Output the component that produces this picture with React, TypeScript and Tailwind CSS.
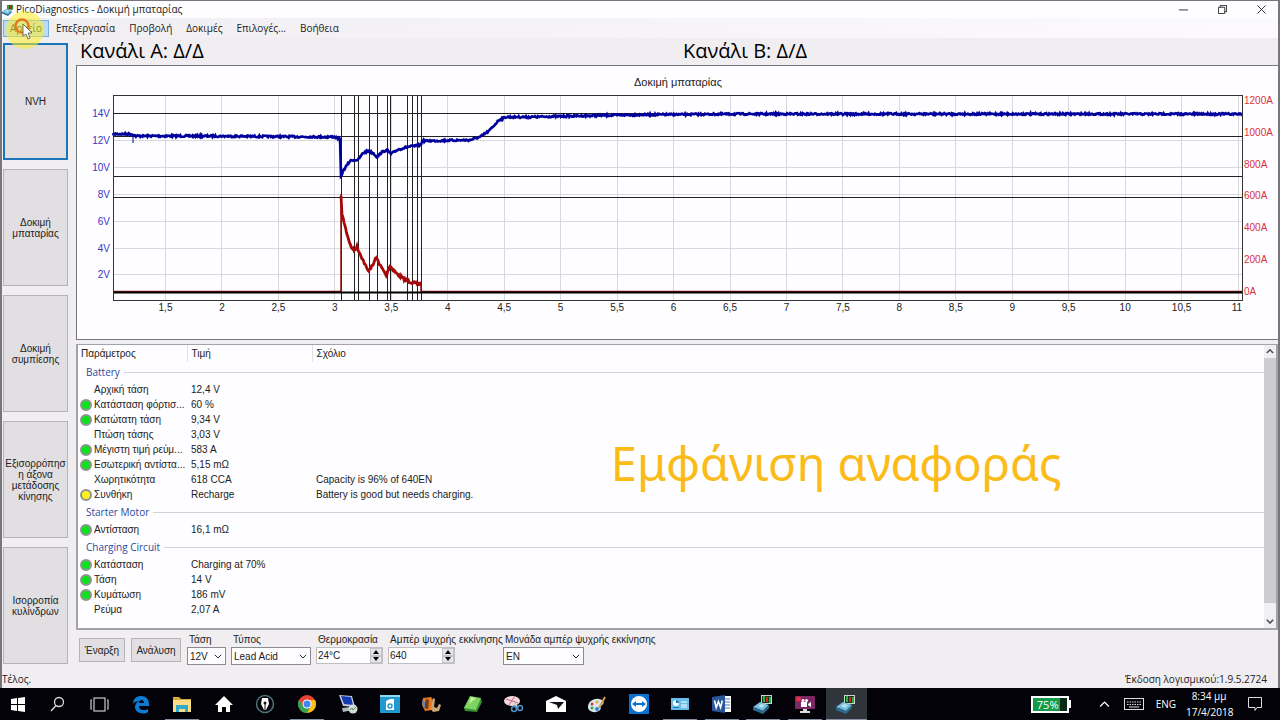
import React from "react";

const UI = "font-['Open_Sans','Noto_Sans',sans-serif]";
const SANS = "font-['Liberation_Sans',Arial,sans-serif]";

type Point = [number, number];

const voltage: Point[] = [
  [36, 68], [54, 68], [59, 70], [124, 70], [258, 71], [263, 73], [264, 111], [266, 105], [273, 95],
  [276, 94], [281, 94], [286, 87], [291, 85], [296, 87], [300, 91], [305, 86], [310, 84], [314, 88],
  [320, 84], [330, 81], [344, 79], [345, 75], [393, 74], [403, 71], [412, 65], [422, 54], [429, 51],
  [453, 51], [543, 49], [663, 48], [1165, 48],
];
const current: Point[] = [
  [264, 131], [265, 148], [267, 156], [270, 168], [274, 181], [277, 184], [280, 181], [285, 192], [291, 205],
  [296, 199], [299, 191], [303, 199], [309, 209], [313, 200], [320, 208], [330, 215], [337, 217], [344, 218],
];

function noisy(points: Point[], amount: number): string {
  const out: string[] = [];
  let seed = 7;
  for (let i = 0; i < points.length - 1; i++) {
    const [x0, y0] = points[i];
    const [x1, y1] = points[i + 1];
    const steps = Math.max(1, Math.round((x1 - x0) * 1.4));
    for (let s = 0; s < steps; s++) {
      seed = (seed * 16807) % 2147483647;
      const jitter = (seed / 2147483647 - 0.5) * amount;
      const t = s / steps;
      out.push(`${(x0 + (x1 - x0) * t).toFixed(1)},${(y0 + (y1 - y0) * t + jitter).toFixed(1)}`);
    }
  }
  const last = points[points.length - 1];
  out.push(`${last[0]},${last[1]}`);
  return out.join(" ");
}

const timeLabels = ["1,5", "2", "2,5", "3", "3,5", "4", "4,5", "5", "5,5", "6", "6,5", "7", "7,5", "8", "8,5", "9", "9,5", "10", "10,5", "11"];
const voltLabels = ["14V", "12V", "10V", "8V", "6V", "4V", "2V"];
const ampLabels = ["1200A", "1000A", "800A", "600A", "400A", "200A", "0A"];
const cursors = [264, 277, 281, 292, 300, 310, 313, 330, 335, 340, 344];

function Chart() {
  return (
    <svg viewBox="0 0 1201 273" className={`block h-auto w-full ${SANS}`} role="img" aria-label="Δοκιμή μπαταρίας">
      <text x="601" y="20" textAnchor="middle" fontSize="11" fill="#222">Δοκιμή μπαταρίας</text>
      <g shapeRendering="crispEdges">
        {timeLabels.map((t, i) => (
          <line key={t} x1={Math.round(88 + i * 56.45)} x2={Math.round(88 + i * 56.45)} y1="29" y2="235" stroke="#d8d8de" />
        ))}
        {voltLabels.map((v, i) => (
          <line key={v} x1="36" x2="1165" y1={Math.round(47 + i * 26.9)} y2={Math.round(47 + i * 26.9)} stroke="#d8d8de" />
        ))}
        {[47, 70, 110, 131].map((y) => (
          <line key={y} x1="36" x2="1165" y1={y} y2={y} stroke="#222" />
        ))}
        {cursors.map((x) => (
          <line key={x} x1={x} x2={x} y1="29" y2="235" stroke="#222" />
        ))}
      </g>
      <polyline points={noisy(voltage, 1.8)} fill="none" stroke="#00009c" strokeWidth="2.6" />
      <path d="M56 69v8" stroke="#00009c" />
      <path d="M36 225.500H264V128" fill="none" stroke="#8d1111" strokeWidth="1.500" />
      <path d="M344 219v6.500H1165" fill="none" stroke="#8d1111" strokeWidth="1.500" />
      <polyline points={noisy(current, 2.4)} fill="none" stroke="#a40a0a" strokeWidth="2.800" />
      <path d="M36 226.500H1165" stroke="#000" strokeWidth="2" />
      <rect x="36.500" y="29.500" width="1129" height="205" fill="none" stroke="#333" />
      {timeLabels.map((t, i) => (
        <text key={t} x={Math.min(1160, 88.500 + i * 56.45)} y="245" textAnchor="middle" fontSize="10" fill="#222">{t}</text>
      ))}
      {voltLabels.map((v, i) => (
        <text key={v} x="33" y={51 + i * 26.9} textAnchor="end" fontSize="10" fill="#4034c8">{v}</text>
      ))}
      {ampLabels.map((a, i) => (
        <text key={a} x="1167" y={38 + i * 31.8} fontSize="10" fill="#d8323c">{a}</text>
      ))}
    </svg>
  );
}

type Row = { name: string; value: string; note?: string; lamp?: "green" | "yellow" };
const groups: { title: string; rows: Row[] }[] = [
  {
    title: "Battery",
    rows: [
      { name: "Αρχική τάση", value: "12,4 V" },
      { name: "Κατάσταση φόρτισ...", value: "60 %", lamp: "green" },
      { name: "Κατώτατη τάση", value: "9,34 V", lamp: "green" },
      { name: "Πτώση τάσης", value: "3,03 V" },
      { name: "Μέγιστη τιμή ρεύμ...", value: "583 A", lamp: "green" },
      { name: "Εσωτερική αντίστα...", value: "5,15 mΩ", lamp: "green" },
      { name: "Χωρητικότητα", value: "618 CCA", note: "Capacity is 96% of 640EN" },
      { name: "Συνθήκη", value: "Recharge", note: "Battery is good but needs charging.", lamp: "yellow" },
    ],
  },
  { title: "Starter Motor", rows: [{ name: "Αντίσταση", value: "16,1 mΩ", lamp: "green" }] },
  {
    title: "Charging Circuit",
    rows: [
      { name: "Κατάσταση", value: "Charging at 70%", lamp: "green" },
      { name: "Τάση", value: "14 V", lamp: "green" },
      { name: "Κυμάτωση", value: "186 mV", lamp: "green" },
      { name: "Ρεύμα", value: "2,07 A" },
    ],
  },
];

function Lamp({ color }: { color?: "green" | "yellow" }) {
  if (!color) return <span className="size-3 shrink-0" />;
  return (
    <span
      className={`size-3 shrink-0 rounded-full border-2 border-[#8f9391] ${color === "green" ? "bg-[#0be41c]" : "bg-[#fdf219]"}`}
    />
  );
}

function Results() {
  return (
    <div className="flex border-2 border-t border-[#a4a3a8] bg-[#fefdff]">
      <table className="mb-[11px] w-full min-w-0 flex-1 table-fixed border-collapse self-start text-left text-[10px] leading-[15px] text-[#222]">
        <colgroup>
          <col className="w-[109px]" />
          <col className="w-[125px]" />
          <col />
        </colgroup>
        <thead>
          <tr className="h-[17px]">
            <th className="border-r border-[#e2e0e6] px-[3px] py-0 font-normal">Παράμετρος</th>
            <th className="border-r border-[#e2e0e6] px-1 py-0 font-normal">Τιμή</th>
            <th className="px-1 py-0 font-normal">Σχόλιο</th>
          </tr>
        </thead>
        {groups.map((g) => (
          <tbody key={g.title}>
            <tr className="h-5">
              <th colSpan={3} className="p-0 pl-2 font-normal">
                <span className={`flex items-center gap-1 text-[10px] text-[#2b4c9b] ${UI}`}>
                  {g.title}
                  <span className="h-px flex-1 bg-[#d3d2da]" />
                </span>
              </th>
            </tr>
            {g.rows.map((r) => (
              <tr key={r.name} className="h-[15px]">
                <td className="p-0 pl-[2px]">
                  <span className="flex items-center gap-[2px] whitespace-nowrap">
                    <Lamp color={r.lamp} />
                    {r.name}
                  </span>
                </td>
                <td className="px-1 py-0">{r.value}</td>
                <td className="px-1 py-0">{r.note}</td>
              </tr>
            ))}
          </tbody>
        ))}
      </table>
      <div className="flex w-3 shrink-0 flex-col items-center justify-between bg-[#f0eff1] py-1 text-[#505050]">
        <Chevron className="w-2 rotate-180" bold />
        <div className="mb-4 mt-1 w-full flex-1 bg-[#cdccce]" />
        <Chevron className="w-2" bold />
      </div>
    </div>
  );
}

function Chevron({ className, bold }: { className: string; bold?: boolean }) {
  return (
    <svg viewBox="0 0 10 6" className={className} fill="none" stroke="currentColor" strokeWidth={bold ? 2 : 1.2} aria-hidden="true">
      <path d="M1 1l4 4 4-4" />
    </svg>
  );
}

function Picker({ id, label, options, field, box }: { id: string; label: string; options: string[]; field: string; box: string }) {
  return (
    <div className={`shrink-0 ${field}`}>
      <label htmlFor={id} className="block whitespace-nowrap pl-[2px] leading-[15px]">{label}</label>
      <div className={`grid items-center ${box}`}>
        <select id={id} className="col-start-1 row-start-1 h-[18px] w-full appearance-none border border-[#8b8a8e] bg-[#fefdff] pl-[2px]">
          {options.map((o) => <option key={o}>{o}</option>)}
        </select>
        <Chevron className="pointer-events-none col-start-1 row-start-1 mr-1 w-2 justify-self-end" />
      </div>
    </div>
  );
}

function Stepper({ id, label, value, field }: { id: string; label: string; value: string; field: string }) {
  return (
    <div className={`shrink-0 ${field}`}>
      <label htmlFor={id} className="block whitespace-nowrap pl-[2px] leading-[15px]">{label}</label>
      <div className="flex h-[17px] w-[67px] border border-[#c0bfc4] bg-[#fefdff]">
        <input id={id} defaultValue={value} className="w-0 flex-1 bg-transparent pl-px outline-none" />
        <div className="flex w-3 flex-col bg-[#e6e5e8]">
          <button type="button" aria-label={`${label} +`} className="flex flex-1 items-center justify-center border border-[#c4c3c7]">
            <svg viewBox="0 0 6 4" className="w-[6px]"><path d="M0 4l3-4 3 4z" /></svg>
          </button>
          <button type="button" aria-label={`${label} -`} className="flex flex-1 items-center justify-center border border-[#c4c3c7]">
            <svg viewBox="0 0 6 4" className="w-[6px]"><path d="M0 0l3 4 3-4z" /></svg>
          </button>
        </div>
      </div>
    </div>
  );
}

const PicoShape = () => (
  <g>
    <path d="M8 1h11v9H8z" fill="#c8d4cc" />
    <path d="M9 2h9v7H9z" fill="#16351f" />
    <path d="M10 2h2v6h-2zM16 3h2v6h-2z" fill="#26b33b" />
    <path d="M13 3h2v5h-2z" fill="#d4222d" />
    <path d="M0 13l7-5 9 3-6 6z" fill="#78bcdc" />
    <path d="M0 13v3l10 4 6-6v-3l-6 6z" fill="#2b6d91" />
    <path d="M5 12l3-2 4 1-3 3z" fill="#b5e2f0" />
  </g>
);

const shapes: Record<string, React.ReactNode> = {
  start: <path fill="#fff" d="M3 5l6-1v6H3zM10 4l7-1v7h-7zM3 11h6v6l-6-1zM10 11h7v7l-7-1z" />,
  search: <g fill="none" stroke="#ddd" strokeWidth="1.300"><circle cx="12" cy="8" r="4.500" /><path d="M9 11.500L4 17" /></g>,
  tasks: <g fill="none" stroke="#ccc" strokeWidth="1.200"><rect x="5" y="4" width="11" height="13" /><path d="M3 6H2v9h1M18 6h1v9h-1" /></g>,
  edge: <path fill="#0c7cd5" d="M2 9C3 4 6 2 10 2c5 0 8 3 8 8v2H8c0 3 2 4 5 4 2 0 3-.5 4-1v3c-1 1-3 1.500-5 1.500-5 0-8-3-8-6.500 0-3 2-5 4-6-3 .5-5 1-6 3zm6 0h5c0-2-1-3-2.500-3S8 7 8 9z" />,
  files: <g><path fill="#d9a83f" d="M1 3h6l2 2h10v13H1z" /><path fill="#fbdd87" d="M1 6h18v12H1z" /><path fill="#35a9ca" d="M4 11h12v7h-3v-3H7v3H4z" /></g>,
  home: <path fill="#fff" d="M10 2l9 9h-3v7h-4v-5H8v5H4v-7H1z" />,
  pen: <g><circle cx="10" cy="10" r="8.500" fill="none" stroke="#51747b" strokeWidth="1.500" /><path fill="#fff" d="M7 4h6l1 6-3 6h-2l-3-6z" /><path stroke="#111" d="M10 10v6" /><circle cx="10" cy="9" r="1.500" fill="#111" /></g>,
  chrome: <g><circle cx="10" cy="10" r="9" fill="#e94335" /><path fill="#34a453" d="M2.200 5.500A9 9 0 0010 19l4-7h-8z" /><path fill="#fbc116" d="M10 6h8a9 9 0 01-8 13l4-7z" /><circle cx="10" cy="10" r="4.500" fill="#fff" /><circle cx="10" cy="10" r="3.500" fill="#4285f4" /></g>,
  remote: <g><path fill="#c2ccd8" d="M1 1l13 1 3 11-12-1z" /><path fill="#1639b4" d="M3 2l10 1 2 8-9-1z" /><path fill="#aeb7c2" d="M4 14l9-1 2 3-10 2z" /><circle cx="15" cy="15" r="4.500" fill="#d4ddd4" /><path d="M12 16l2-2 1 2 3-3" fill="none" stroke="#569060" /></g>,
  doc: <g><path fill="#2299ce" d="M0 1h20v18H0z" /><path fill="#8ed8f0" d="M0 1h20v2H0z" /><path fill="#fff" d="M6 7l4-2h4v11H6z" /><circle cx="10" cy="12" r="2" fill="none" stroke="#2299ce" strokeWidth="1.500" /></g>,
  game: <g><path fill="#e37a23" d="M2 4l8-1 3 5-2 8-7 1-3-6z" /><path fill="#7c3515" d="M5 5l3 1-1 9-4-1z" /><path fill="#5a88b7" d="M1 6l3 2v6l-2-1z" /><path fill="#c7a873" d="M12 4l2 1-1 8 3 1 2-4 2 1-2 6-6 1-2-3z" /></g>,
  green: <g><path fill="#388d34" d="M7 3l11 2 1 3-5 10-12-1-1-3z" /><path fill="#7dd45f" d="M7 2l11 2-5 12-12-2z" /><path fill="#c5f0a5" d="M8 3l5 1-7 6z" /></g>,
  snip: <g><ellipse cx="8" cy="7" rx="8" ry="5" fill="#f0d9de" /><path d="M2 5l12 4M5 11l6-9" stroke="#d06277" /><path d="M10 9l4 5" stroke="#ccc" strokeWidth="2" /><circle cx="10" cy="15" r="2.500" fill="none" stroke="#4c8ec6" strokeWidth="1.500" /><circle cx="16" cy="14" r="2.500" fill="none" stroke="#4c8ec6" strokeWidth="1.500" /></g>,
  mail: <g><path fill="#fff" d="M0 7l10-5 10 5v11H0z" /><path fill="#111" d="M3 8h15l-6 7-1-4z" /></g>,
  paint: <g><path fill="#d9e7ee" d="M1 13c0-5 5-9 11-8 5 1 6 4 3 6s0 3-2 5c-4 4-12 2-12-3z" /><circle cx="5" cy="10" r="1.500" fill="#d63b3b" /><circle cx="10" cy="8" r="1.500" fill="#e9ad22" /><circle cx="5" cy="14" r="1.500" fill="#3aa34b" /><circle cx="10" cy="15" r="2" fill="#3187ca" /><path d="M12 14l6-11" stroke="#d29b50" strokeWidth="2" /></g>,
  viewer: <g><rect width="20" height="20" fill="#0871cf" /><circle cx="10" cy="10" r="8" fill="#fff" /><path fill="#0871cf" d="M3 10l4-3v2h6V7l4 3-4 3v-2H7v2z" /></g>,
  card: <g><rect x="1" y="4" width="18" height="12" fill="#67bfe9" /><circle cx="6" cy="9" r="3" fill="#fff" /><path fill="#1879bb" d="M6 6v3h3a3 3 0 00-3-3zM3 13h6v1H3z" /><path stroke="#fff" d="M11 8h6M11 11h6M11 13h6" /></g>,
  word: <g><path fill="#fff" d="M9 2h10v16H9z" /><path stroke="#4877b9" d="M13 5h5M13 8h5M13 11h5M13 14h5" /><path fill="#2a5699" d="M0 3l13-2v18L0 17z" /><path d="M2.500 6.500l1.700 7 2.200-6 2.200 6 1.700-7" fill="none" stroke="#fff" strokeWidth="1.600" /></g>,
  pico: <PicoShape />,
  record: <g><rect y="2" width="20" height="13" rx="1" fill="#7c2865" /><path fill="#ddd" d="M8 15h4v2h3v2H5v-2h3z" /><circle cx="3.500" cy="5" r="2.500" fill="#e33040" /><path fill="#fff" d="M6 8h6v5H6zM13 10l3-2v5l-3-2z" /><circle cx="8" cy="6.500" r="1.500" fill="#fff" /><circle cx="11.500" cy="6.500" r="1.500" fill="#fff" /></g>,
};

const apps: { icon: string; name: string; open?: boolean; active?: boolean }[] = [
  { icon: "edge", name: "Edge" }, { icon: "files", name: "Explorer", open: true }, { icon: "home", name: "Home" },
  { icon: "pen", name: "Pen" }, { icon: "chrome", name: "Chrome", open: true }, { icon: "remote", name: "Remote" },
  { icon: "doc", name: "Documents" }, { icon: "game", name: "Game" }, { icon: "green", name: "Notes" },
  { icon: "snip", name: "Snipping" }, { icon: "mail", name: "Mail" }, { icon: "paint", name: "Paint" },
  { icon: "viewer", name: "TeamViewer" }, { icon: "card", name: "Contacts", open: true }, { icon: "word", name: "Word", open: true },
  { icon: "pico", name: "PicoScope", open: true }, { icon: "record", name: "Recorder", open: true },
  { icon: "pico", name: "PicoDiagnostics", open: true, active: true },
];

function Icon({ name }: { name: string }) {
  return <svg viewBox="0 0 20 20" className="size-5" aria-hidden="true">{shapes[name]}</svg>;
}

function Taskbar() {
  return (
    <footer className={`flex h-8 items-stretch bg-[#020208] text-white ${UI}`}>
      <button aria-label="Start" className="flex w-9 items-center justify-center"><Icon name="start" /></button>
      <button aria-label="Search" className="flex w-[42px] items-center justify-center"><Icon name="search" /></button>
      <button aria-label="Task view" className="flex w-[42px] items-center justify-center"><Icon name="tasks" /></button>
      <nav className="flex w-[747px]">
        {apps.map((a) => (
          <button
            key={a.name}
            aria-label={a.name}
            className={`flex flex-1 flex-col items-center pt-[6px] ${a.active ? "bg-[#30343b]" : ""}`}
          >
            <Icon name={a.icon} />
            {a.open && <span className={`mt-auto h-px bg-[#8490a3] ${a.active ? "w-full" : "w-[34px]"}`} />}
          </button>
        ))}
      </nav>
      <div className="ml-auto flex items-center text-[10px] leading-4">
        <div className="flex items-center">
          <div className="h-[17px] w-[38px] border-2 border-white bg-[linear-gradient(90deg,#139b49_78%,#072b16_78%)] pr-1 text-center text-[11px] leading-[13px]">75%</div>
          <span className="h-2 w-[2px] bg-white" />
        </div>
        <Chevron className="ml-7 w-[11px] rotate-180" />
        <svg viewBox="0 0 20 12" className="ml-[14px] w-5" fill="none" stroke="#ddd"><rect x=".5" y=".5" width="19" height="11" /><path d="M3 4h14M3 6.500h14" strokeDasharray="1.500 1" /><path d="M5 9h10" /></svg>
        <span className="ml-3">ENG</span>
        <div className="ml-[10px] w-[46px] whitespace-nowrap text-center"><div>8:34 μμ</div><div>17/4/2018</div></div>
        <svg viewBox="0 0 14 14" className="ml-4 mr-[18px] w-[14px]" fill="none" stroke="#ddd"><path d="M.5.5h13v10H9l-2 3v-3H.5z" /></svg>
      </div>
    </footer>
  );
}

const tests = ["NVH", "Δοκιμή μπαταρίας", "Δοκιμή συμπίεσης", "Εξισορρόπησ η άξονα μετάδοσης κίνησης", "Ισορροπία κυλίνδρων"];
const menu = ["Επεξεργασία", "Προβολή", "Δοκιμές", "Επιλογές...", "Βοήθεια"];

export default function App() {
  return (
    <div className={`relative flex min-h-screen flex-col bg-[#f0eef1] text-[10px] text-[#222] ${SANS}`}>
      <div className="flex flex-1 flex-col border-x-2 border-t border-[#77767b]">
        <header className={`flex h-[17px] items-center bg-[#fefdff] ${UI}`}>
          <svg viewBox="0 0 20 20" className="size-3" aria-hidden="true"><PicoShape /></svg>
          <h1 className="pl-[2px] text-[10px]">PicoDiagnostics - Δοκιμή μπαταρίας</h1>
          <div className="ml-auto flex gap-[30px] pr-3">
            <button aria-label="Minimize"><svg viewBox="0 0 10 10" className="size-[9px]" stroke="#222"><path d="M0 5.500h10" /></svg></button>
            <button aria-label="Restore"><svg viewBox="0 0 10 10" className="size-[9px]" fill="none" stroke="#222"><path d="M.5 2.500h7v7h-7zM2.500 2.500v-2h7v7h-2" /></svg></button>
            <button aria-label="Close"><svg viewBox="0 0 10 10" className="size-[9px]" stroke="#222"><path d="M.5.5l9 9M9.500.5l-9 9" /></svg></button>
          </div>
        </header>
        <nav className={`flex h-5 items-center bg-[linear-gradient(90deg,#f0eef1,#fcfaff)] ${UI}`}>
          <button className="ml-px h-[17px] w-[46px] border border-[#78aede] bg-[#bcdcf4]">Αρχείο</button>
          <div className="flex gap-[14px] pl-[7px]">
            {menu.map((m) => <button key={m}>{m}</button>)}
          </div>
        </nav>
        <main className="flex flex-1 gap-2">
          <aside className="flex w-[66px] shrink-0 flex-col gap-[9px] pl-px pt-[5px]">
            {tests.map((t, i) => (
              <button
                key={t}
                className={`h-[117px] leading-[11px] ${i === 0 ? "border-2 border-[#1b75bb] bg-[#e1dfe2]" : "border border-[#b5b3b8] bg-[#e1dfe2]"}`}
              >
                {t}
              </button>
            ))}
          </aside>
          <section className="flex min-w-0 flex-1 flex-col">
            <div className={`flex h-[27px] pl-1 text-[20px] leading-[25px] text-black ${UI}`}>
              <h2 className="w-1/2">Κανάλι A: Δ/Δ</h2>
              <h2 className="pl-1">Κανάλι B: Δ/Δ</h2>
            </div>
            <div className="mb-1 border-y border-l border-[#77767b] bg-[#fefdff]"><Chart /></div>
            <div className="grid">
              <div className="col-start-1 row-start-1 min-w-0"><Results /></div>
              <p className="pointer-events-none col-start-1 row-start-1 self-center justify-self-end whitespace-nowrap pb-[48px] pr-[18%] font-['Noto_Sans','Open_Sans',sans-serif] text-[47px] leading-[60px] text-[#fbbb18]">
                Εμφάνιση αναφοράς
              </p>
            </div>
            <form className="flex items-start pl-[3px] pt-[2px]" onSubmit={(e) => e.preventDefault()}>
              <button type="button" className="mt-[6px] h-6 w-[46px] border border-[#b5b3b8] bg-[#e1dfe2]">Έναρξη</button>
              <button type="button" className="ml-[6px] mr-[6px] mt-[6px] h-6 w-[50px] border border-[#b5b3b8] bg-[#e1dfe2]">Ανάλυση</button>
              <Picker id="volt" label="Τάση" options={["12V", "24V"]} field="w-11" box="w-[39px]" />
              <Picker id="kind" label="Τύπος" options={["Lead Acid", "AGM"]} field="w-[85px]" box="w-20" />
              <Stepper id="temp" label="Θερμοκρασία" value="24°C" field="w-[72px]" />
              <Stepper id="cca" label="Αμπέρ ψυχρής εκκίνησης" value="640" field="w-[115px]" />
              <Picker id="unit" label="Μονάδα αμπέρ ψυχρής εκκίνησης" options={["EN", "SAE", "DIN"]} field="w-40" box="w-[81px]" />
            </form>
          </section>
        </main>
        <div className={`flex h-[17px] items-center justify-between pr-[11px] ${UI}`}>
          <span>Τέλος.</span>
          <span>Έκδοση λογισμικού:1.9.5.2724</span>
        </div>
      </div>
      <Taskbar />
      <svg viewBox="0 0 44 44" className="pointer-events-none absolute left-[3px] top-[8px] size-11" aria-hidden="true">
        <circle cx="22" cy="22" r="19" fill="#ffee21" opacity=".55" />
        <circle cx="19" cy="18" r="6.500" fill="none" stroke="#e5791c" strokeWidth="2.400" />
        <path d="M20 16v12l3-2 2 5 2-1-2-5h4z" fill="#fff" stroke="#555" strokeWidth=".8" />
      </svg>
    </div>
  );
}
